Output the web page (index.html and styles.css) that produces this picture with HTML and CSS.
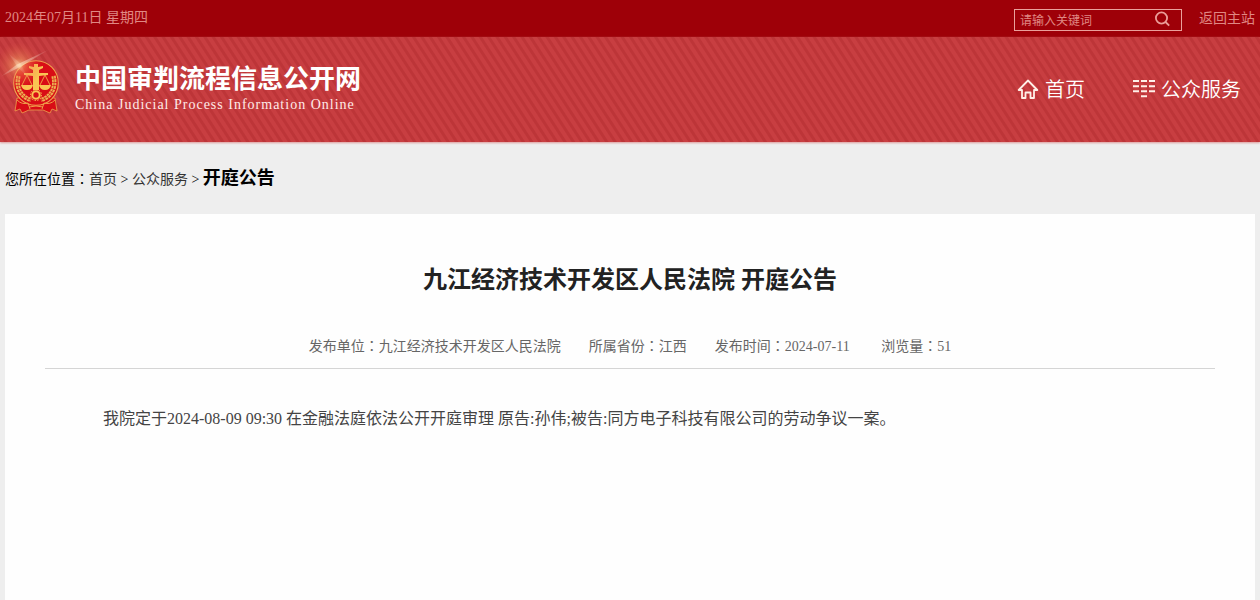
FILE: index.html
```html
<!DOCTYPE html>
<html lang="zh-CN">
<head>
<meta charset="utf-8">
<title>中国审判流程信息公开网</title>
<link rel="stylesheet" href="styles.css">
</head>
<body>
<div class="topbar">
  <span class="date">2024年07月11日 星期四</span>
  <div class="tools">
    <div class="search">
      <span>请输入关键词</span>
      <svg width="16" height="16" viewBox="0 0 16 16" fill="none" stroke="#eb9d99" stroke-width="1.8"><circle cx="7.5" cy="7" r="5.6"/><path d="M11.5 11L15.2 14.7"/></svg>
    </div>
    <a class="back">返回主站</a>
  </div>
</div>
<header class="header">
  <svg class="emblem" width="75" height="105" viewBox="0 0 75 105">
    <defs>
      <radialGradient id="glow"><stop offset="0" stop-color="#ffd89a" stop-opacity=".8"/><stop offset=".3" stop-color="#f59a60" stop-opacity=".5"/><stop offset="1" stop-color="#e85c45" stop-opacity="0"/></radialGradient>
      <linearGradient id="ray"><stop offset="0" stop-color="#fff" stop-opacity="0"/><stop offset=".4" stop-color="#ffe8c4" stop-opacity=".6"/><stop offset="1" stop-color="#fff" stop-opacity="0"/></linearGradient>
    </defs>
    <path d="M17 61l-2 13 5-2 2 4 7-3 14 0 7 3 2-4 5 2-2-13z" fill="#d80c16" stroke="#eda04d" stroke-width=".8"/>
    <circle cx="36" cy="46" r="22.3" fill="#d90d16" stroke="#f0a550" stroke-width="1.1"/>
    <g fill="none" stroke="#eeb052" stroke-width="4.4" stroke-dasharray="2.7 .6"><path d="M18.500 39C15 54 24 61 31 63"/><path d="M53.500 39C57 54 48 61 41 63"/></g>
    <g fill="none" stroke="#c92118" stroke-width=".6"><path d="M18.500 39C15 54 24 61 31 63M53.500 39C57 54 48 61 41 63"/></g>
    <g fill="#fac453"><path d="M34 30V27h4v3l5-1v2l-4 2v3h9v2l-9 1v14h-6V39l-9-1v-2h9v-3l-4-2v-2z"/><path d="M21 48h12q-1 5-6 5t-6-5zM39 48h12q-1 5-6 5t-6-5z"/></g>
    <path d="M27 38l-5 10M27 38l5 10M45 38l-5 10M45 38l5 10" stroke="#f3ae4a" stroke-width=".9"/>
    <circle cx="36" cy="58" r="3.700" fill="#d90d16" stroke="#fac453" stroke-width="2"/><circle cx="36" cy="58" r="5.500" fill="none" stroke="#fac453" stroke-dasharray="1.5 1.300"/>
    <path d="M17 63q5 5 11 3l2 6M55 63q-5 5-11 3l-2 6M29 70q7-2 14 0" fill="none" stroke="#f09c48"/>
    <circle cx="19" cy="28" r="23" fill="url(#glow)"/>
    <path d="M0 40L17 27.500 50 12 20 30z" fill="url(#ray)"/><path d="M8 16l12 10 9 16-12-13z" fill="url(#ray)" opacity=".4"/>
  </svg>
  <div class="brand">
    <div class="name">中国审判流程信息公开网</div>
    <div class="english">China Judicial Process Information Online</div>
  </div>
  <nav class="nav">
    <a class="home"><svg width="22" height="21" viewBox="0 0 22 21" fill="none" stroke="#fff0e8" stroke-width="1.8" stroke-linejoin="round"><path d="M11 1.500L20.300 11H17V19H13.500V13.500H8.500V19H5V11H1.700z"/></svg>首页</a>
    <a class="service"><svg width="22" height="19" viewBox="0 0 22 19" stroke="#fff0e8" stroke-width="2.1" stroke-dasharray="6 2"><path d="M0 2H22M0 7.200H22M0 12.200H22M8 17.200H14"/></svg>公众服务</a>
  </nav>
</header>
<main class="page">
  <div class="crumbs">您所在位置<i lang="zh-Hant">：</i><a>首页</a> &gt; <a>公众服务</a> &gt; <b>开庭公告</b></div>
  <article class="notice">
    <h1>九江经济技术开发区人民法院 开庭公告</h1>
    <div class="meta">
      <span>发布单位<i lang="zh-Hant">：</i>九江经济技术开发区人民法院</span>
      <span>所属省份<i lang="zh-Hant">：</i>江西</span>
      <span>发布时间<i lang="zh-Hant">：</i>2024-07-11</span>
      <span class="views">浏览量<i lang="zh-Hant">：</i>51</span>
    </div>
    <p>我院定于2024-08-09 09:30 在金融法庭依法公开开庭审理 原告:孙伟;被告:同方电子科技有限公司的劳动争议一案。</p>
  </article>
</main>
</body>
</html>
```
FILE: styles.css
```css
* { box-sizing: border-box; }
body {
  margin: 0;
  height: 600px;
  overflow: hidden;
  background: #eee;
  font: 400 14px/20px "Liberation Serif", "Noto Sans CJK SC", serif;
  color: #000;
}
i { font-style: normal; font-family: "Noto Sans CJK TC", sans-serif; line-height: 1; }
svg { display: block; flex: none; }
.topbar {
  display: flex;
  justify-content: space-between;
  height: 37px;
  padding: 0 5px;
  background: #9e0008;
  color: #e08884;
}
.date { padding-top: 8px; }
.tools { display: flex; gap: 17px; }
.search {
  display: flex;
  justify-content: space-between;
  width: 168px;
  height: 22px;
  margin-top: 9px;
  padding: 1px 11px 0 5px;
  border: 1px solid #eaa09b;
  font-size: 12px;
  line-height: 20px;
}
.back { padding-top: 9px; }
.header {
  display: flex;
  height: 105px;
  background: repeating-linear-gradient(57deg, #c83e41 0 3px, #bd3538 4px 6px, #c83e41 7px);
  box-shadow: 0 1px 2px #d99;
  color: #fff;
}
.brand { padding-top: 27px; white-space: nowrap; }
.name { font-size: 26px; font-weight: 700; line-height: 32px; }
.english { font-size: 14px; letter-spacing: 1px; line-height: 18px; color: #ffeae8; }
.nav { display: flex; gap: 48px; margin-left: auto; padding: 38px 19px 0 0; font-size: 20px; line-height: 30px; font-weight: 350; }
.nav a { display: flex; }
.home { gap: 6px; }
.home svg { margin-top: 4px; }
.service { gap: 6px; }
.service svg { margin-top: 4px; }
.page { padding: 0 5px; }
.crumbs { height: 72px; padding-top: 23px; line-height: 26px; }
.crumbs a { color: #333; }
.crumbs b { font-size: 18px; }
.notice { height: 386px; padding: 0 40px; background: #fefefe; }
h1 { margin: 0; padding-top: 48px; font-size: 24px; font-weight: 700; line-height: 36px; text-align: center; color: #222; }
.meta {
  display: flex;
  justify-content: center;
  gap: 28px;
  height: 71px;
  padding-top: 39px;
  border-bottom: 1px solid #d5d5d5;
  color: #666;
}
.views { margin-left: 3.5px; }
p { margin: 35px 0 0 58px; font-size: 16px; line-height: 30px; color: #444; }
```
